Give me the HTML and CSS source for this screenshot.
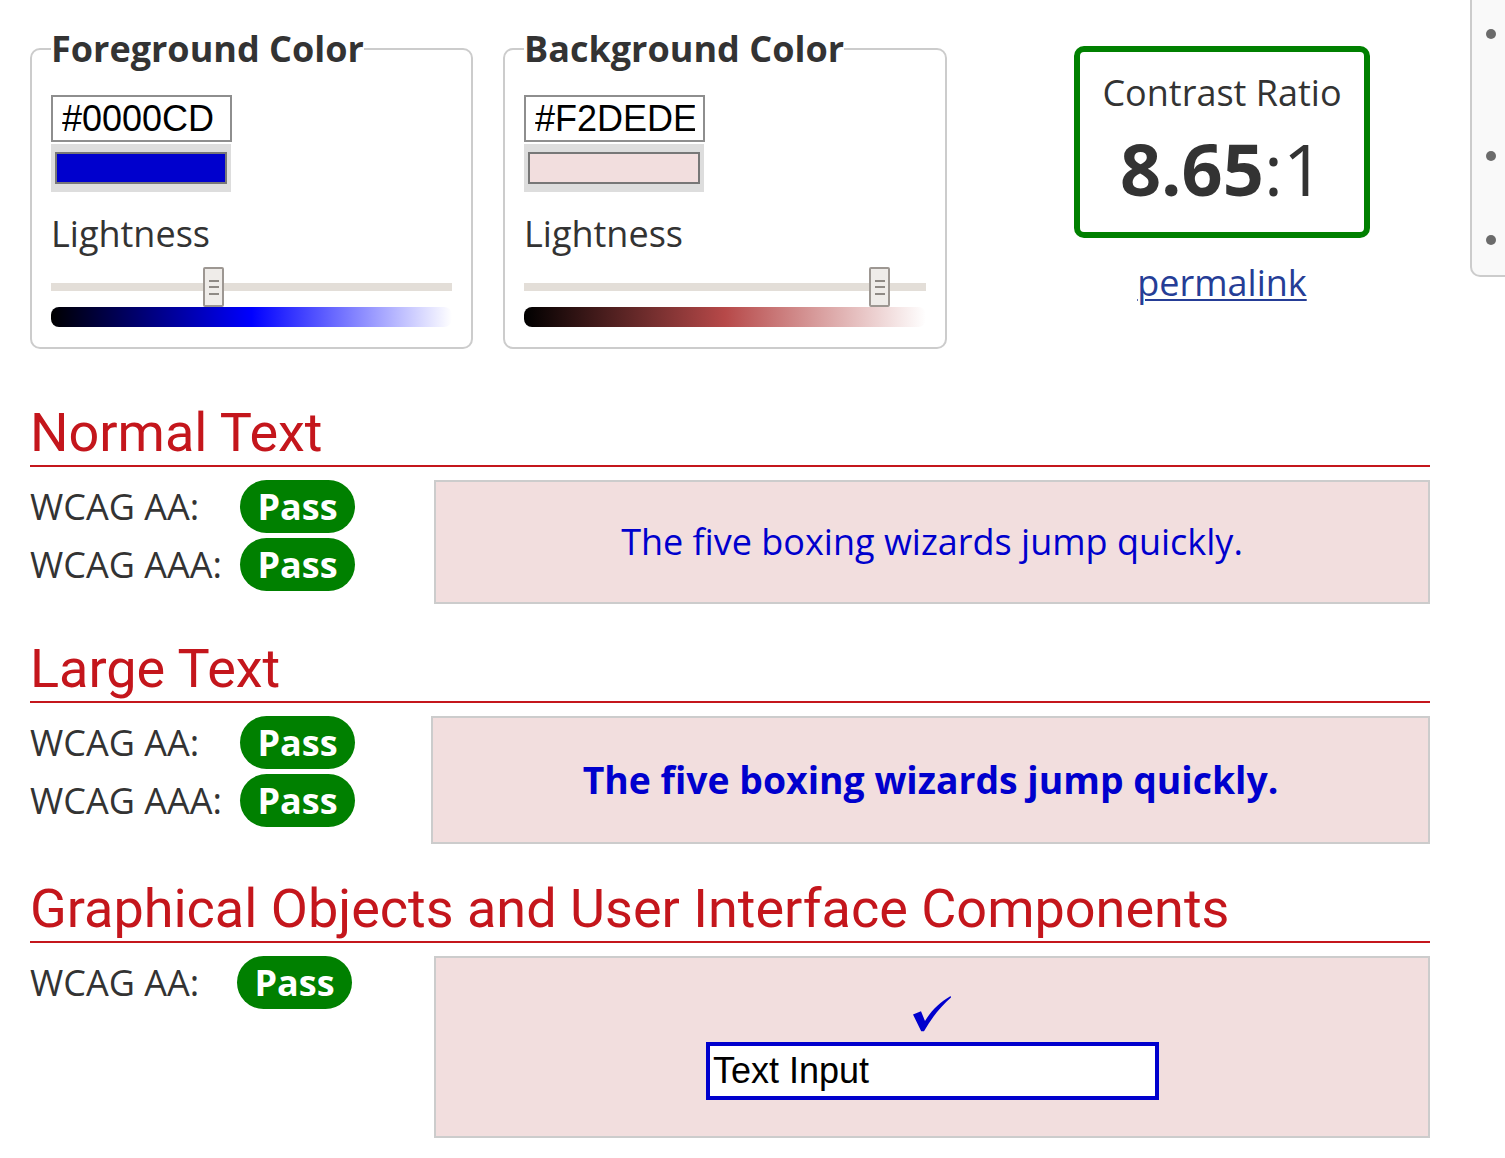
FILE: index.html
```html
<!DOCTYPE html>
<html lang="en">
<head>
<meta charset="utf-8">
<title>Contrast Checker</title>
<link rel="stylesheet" href="styles.css">
</head>
<body>
<div class="page">
  <div class="top">
    <fieldset class="picker">
      <legend>Foreground Color</legend>
      <input class="hex" type="text" value="#0000CD" aria-label="Foreground hex">
      <div class="swatch"><div class="swatch-fill swatch-fill--fg"></div></div>
      <div class="slider-label">Lightness</div>
      <div class="slider">
        <div class="slider-track"></div>
        <div class="slider-thumb" style="left: 152px"><span></span><span></span><span></span></div>
      </div>
      <div class="gradient gradient--fg"></div>
    </fieldset>

    <fieldset class="picker picker--bg">
      <legend>Background Color</legend>
      <input class="hex" type="text" value="#F2DEDE" aria-label="Background hex">
      <div class="swatch"><div class="swatch-fill swatch-fill--bg"></div></div>
      <div class="slider-label">Lightness</div>
      <div class="slider">
        <div class="slider-track"></div>
        <div class="slider-thumb" style="left: 345px"><span></span><span></span><span></span></div>
      </div>
      <div class="gradient gradient--bg"></div>
    </fieldset>

    <div class="ratio-col">
      <div class="ratio-box">
        <div class="ratio-title">Contrast Ratio</div>
        <div class="ratio-value"><b>8.65</b>:1</div>
      </div>
      <a class="permalink" href="#">permalink</a>
    </div>
  </div>

  <section class="section">
    <h2 class="section-title">Normal Text</h2>
    <div class="section-body">
      <div class="results">
        <div class="result-label">WCAG AA:</div>
        <div class="badge">Pass</div>
        <div class="result-label">WCAG AAA:</div>
        <div class="badge">Pass</div>
      </div>
      <div class="sample sample--normal">The five boxing wizards jump quickly.</div>
    </div>
  </section>

  <section class="section">
    <h2 class="section-title">Large Text</h2>
    <div class="section-body">
      <div class="results results--large">
        <div class="result-label">WCAG AA:</div>
        <div class="badge">Pass</div>
        <div class="result-label">WCAG AAA:</div>
        <div class="badge">Pass</div>
      </div>
      <div class="sample sample--large">The five boxing wizards jump quickly.</div>
    </div>
  </section>

  <section class="section">
    <h2 class="section-title">Graphical Objects and User Interface Components</h2>
    <div class="section-body">
      <div class="results results--ui">
        <div class="result-label">WCAG AA:</div>
        <div class="badge">Pass</div>
      </div>
      <div class="sample sample--ui">
        <svg class="check" viewBox="0 0 38 36" width="38" height="36" aria-hidden="true">
          <path d="M0,18.5 L8,15.2 L12,25 C18,15 27,6 37.6,0 L38,1.4 C28,10 18.5,22 11,35.2 L8.2,35.2 Z" fill="#0000cd"/>
        </svg>
        <input class="text-input" type="text" value="Text Input" aria-label="Text Input">
      </div>
    </div>
  </section>
</div>

<aside class="side-panel">
  <span class="dot dot--1"></span>
  <span class="dot dot--2"></span>
  <span class="dot dot--3"></span>
</aside>
</body>
</html>
```

FILE: styles.css
```css
* { box-sizing: border-box; }

html, body {
  margin: 0;
  padding: 0;
  background: #fff;
}

body {
  font-family: "Open Sans", "DejaVu Sans", sans-serif;
  font-size: 36px;
  color: #333;
}

.page {
  width: 1400px;
  margin-left: 30px;
}

/* ---------- top row ---------- */
.top {
  display: flex;
  align-items: flex-start;
  gap: 30px;
  padding-top: 24px;
  padding-bottom: 18.5px;
}

.picker {
  flex-shrink: 0;
  width: 443px;
  margin: 0;
  padding: 22px 19px 20px;
  border: 2px solid #ccc;
  border-radius: 10px;
  min-inline-size: 0;
}

.picker--bg { width: 444px; }

.picker legend {
  padding: 0;
  font-weight: 700;
  font-size: 36px;
  line-height: 49px;
  color: #333;
}

.hex {
  display: block;
  width: 181px;
  height: 47px;
  margin: 0;
  padding: 0 8px 0 9px;
  border: 2px solid #8e8e8e;
  border-radius: 0;
  background: #fff;
  font-family: "Liberation Sans", Arial, sans-serif;
  font-size: 36px;
  color: #000;
}

.swatch {
  width: 180px;
  height: 48px;
  margin-top: 2px;
  padding: 8px 4px;
  background: #ddd;
}

.swatch-fill {
  height: 32px;
  border: 2px solid #777;
}

.swatch-fill--fg { background: #0000cd; }
.swatch-fill--bg { background: #f2dede; }

.slider-label {
  margin-top: 17px;
  line-height: 49px;
  color: #333;
}

.slider {
  position: relative;
  height: 40px;
  margin-top: 9px;
  display: flex;
  align-items: center;
}

.slider-track {
  width: 100%;
  height: 8px;
  background: #e3ded8;
}

.slider-thumb {
  position: absolute;
  top: 0;
  width: 21px;
  height: 40px;
  background: #efece9;
  border: 2px solid #9d9792;
  border-radius: 2px;
  display: flex;
  flex-direction: column;
  align-items: center;
  justify-content: center;
  gap: 4.5px;
}

.slider-thumb span {
  display: block;
  width: 10px;
  height: 2px;
  background: #8f8a85;
}

.gradient {
  height: 20px;
  border-radius: 8px;
}

.gradient--fg {
  background: linear-gradient(to right, #000 0%, #00f 50%, #fff 100%);
}

.gradient--bg {
  background: linear-gradient(to right, hsl(0, 43%, 0%) 0%, hsl(0, 43%, 50%) 50%, hsl(0, 43%, 100%) 100%);
}

.ratio-col {
  flex: 1;
  min-width: 0;
  margin-top: 22px;
  padding-left: 37px;
  display: flex;
  flex-direction: column;
  align-items: center;
}

.ratio-box {
  width: 296px;
  padding: 16px 0 15px;
  border: 6px solid #008000;
  border-radius: 10px;
  text-align: center;
  color: #333;
}

.ratio-title {
  line-height: 49px;
}

.ratio-value {
  margin-top: 2px;
  font-size: 72px;
  line-height: 98px;
}

.ratio-value b { font-weight: 700; }

.permalink {
  margin-top: 20px;
  line-height: 49px;
  color: #253d96;
  text-decoration: underline;
  text-decoration-thickness: 2px;
  text-underline-offset: 3px;
}

/* ---------- sections ---------- */
.section {
  margin-top: 33.5px;
}

.section-title {
  margin: 0 0 12.5px;
  font-family: "Roboto", "Liberation Sans", sans-serif;
  font-weight: 400;
  font-size: 54px;
  line-height: 64px;
  color: #c4161c;
  border-bottom: 2px solid #c4161c;
}

.section-body {
  display: flex;
  align-items: flex-start;
}

.results {
  width: 404px;
  flex-shrink: 0;
  display: grid;
  grid-template-columns: 210px auto;
  grid-auto-rows: 53px;
  row-gap: 5px;
  align-items: center;
  justify-items: start;
}

.results--large { width: 401px; }
.results--ui { grid-template-columns: 207px auto; }

.result-label {
  line-height: 49px;
  color: #333;
}

.badge {
  width: 115px;
  padding: 2px 0;
  line-height: 49px;
  border-radius: 27px;
  background: #008000;
  color: #fff;
  font-weight: 700;
  text-align: center;
}

.sample {
  flex: 1;
  background: #f2dede;
  border: 2px solid #ccc;
  color: #0000cd;
  text-align: center;
  line-height: 49px;
}

.sample--normal { padding: 35.5px 10px; }

.sample--large {
  padding: 36.5px 10px;
  font-weight: 700;
  font-size: 37.33px;
  line-height: 51px;
}

.sample--ui {
  display: flex;
  flex-direction: column;
  align-items: center;
  padding: 38px 0 36px;
}

.check {
  display: block;
  width: 38px;
  height: 36px;
  margin-bottom: 10.6px;
}

.text-input {
  display: block;
  width: 453px;
  height: 58px;
  margin: 0;
  padding: 0 3.5px;
  border: 4px solid #0000cd;
  border-radius: 0;
  background: #fff;
  font-family: "Liberation Sans", Arial, sans-serif;
  font-size: 36px;
  color: #000;
}

/* ---------- side panel ---------- */
.side-panel {
  position: fixed;
  top: 0;
  right: -20px;
  width: 55px;
  height: 277px;
  background: #f9f9f9;
  border-left: 2px solid #ccc;
  border-bottom: 2px solid #ccc;
  border-bottom-left-radius: 10px;
  display: flex;
  flex-direction: column;
  padding-left: 14px;
}

.dot {
  display: block;
  width: 10px;
  height: 10px;
  border-radius: 50%;
  background: #6b6b6b;
}

.dot--1 { margin-top: 29px; }
.dot--2 { margin-top: 112px; }
.dot--3 { margin-top: 74px; }
```
